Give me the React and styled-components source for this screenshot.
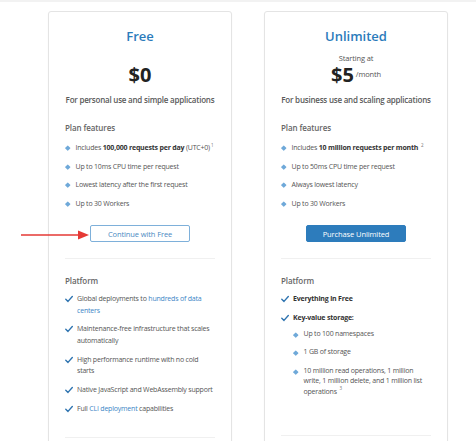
import React from "react";
import styled, {createGlobalStyle} from "styled-components";

const GlobalStyle = createGlobalStyle`
  html, body {
    margin: 0;
    padding: 0;
    background: #ffffff;
    overflow: hidden;
  }
  body {
    font-family: "Open Sans", "Noto Sans", "Liberation Sans", sans-serif;
    color: #4a4a4a;
  }
`;

const Page = styled.div`
  position: relative;
  height: 441px;
  border-top: 2px solid #f2f2f2;
  box-sizing: border-box;
`;

const Cards = styled.div`
  display: flex;
  gap: 32px;
  padding: 9px 0 0 48px;
  align-items: flex-start;
`;

const Card = styled.div`
  width: 184px;
  height: 470px;
  box-sizing: border-box;
  border: 1px solid #e4e4e4;
  border-radius: 3px;
  box-shadow: 0 1px 2px rgba(0, 0, 0, 0.04);
  padding: 16px 16px 0;
  background: #fff;
`;

const Header = styled.div`
  text-align: center;
`;

const Title = styled.div`
  font-size: 13px;
  line-height: 16px;
  font-weight: 600;
  color: #2b7bbb;
`;

const StartingAt = styled.div`
  font-size: 7.5px;
  line-height: 10px;
  margin-top: 9px;
  color: #555;
  letter-spacing: -0.15px;
  visibility: ${props => props.$hidden ? "hidden" : "visible"};
`;

const Price = styled.div`
  margin-top: 1px;
  height: 22px;
  line-height: 22px;
  display: flex;
  justify-content: center;
  align-items: baseline;
  gap: 2px;
`;

const Amount = styled.span`
  font-size: 20px;
  font-weight: 700;
  color: #222;
`;

const Per = styled.span`
  font-size: 7.5px;
  color: #555;
  letter-spacing: -0.15px;
  position: relative;
  top: -5px;
`;

const Subtitle = styled.div`
  margin-top: 8px;
  font-size: 8px;
  line-height: 12px;
  font-weight: 600;
  color: #5a5a5a;
  white-space: nowrap;
  letter-spacing: -0.22px;
`;

const SectionTitle = styled.div`
  margin-top: ${props => props.$top || 16}px;
  font-size: 8px;
  line-height: 12px;
  font-weight: 600;
  color: #666;
  letter-spacing: -0.1px;
`;

const List = styled.ul`
  list-style: none;
  margin: ${props => props.$top || 8}px 0 0;
  padding: 0 0 0 ${props => props.$indent || 0}px;
  display: flex;
  flex-direction: column;
  gap: ${props => props.$gap || 7}px;
`;

const Item = styled.li`
  display: flex;
  align-items: flex-start;
  font-size: 7px;
  letter-spacing: -0.2px;
  line-height: ${props => props.$lh || 11.5}px;
  color: ${props => props.$strong ? "#333" : "#555"};
  font-weight: ${props => props.$strong ? 700 : 400};
`;

const Bullet = styled.span`
  flex: none;
  width: 3.5px;
  height: 3.5px;
  margin: 4px 6px 0 1px;
  background: #6fa9d9;
  transform: rotate(45deg);
  border-radius: 0.5px;
`;

const CheckWrap = styled.span`
  flex: none;
  width: 8px;
  height: 8px;
  margin: 2px 4px 0 0;
  display: flex;
`;

const Bold = styled.b`
  font-weight: 700;
  color: #333;
`;

const Sup = styled.sup`
  font-size: 4.5px;
  line-height: 0;
  margin-left: 1px;
  color: #777;
`;

const Link = styled.a`
  color: #3b86c6;
  text-decoration: none;
`;

const ButtonRow = styled.div`
  margin-top: 16px;
  display: flex;
  justify-content: center;
`;

const Button = styled.button`
  width: 100px;
  height: 17px;
  box-sizing: border-box;
  border-radius: 2px;
  font-family: inherit;
  font-size: 7.5px;
  letter-spacing: -0.1px;
  padding: 0;
  cursor: pointer;
  border: 1px solid ${props => props.$primary ? "#2d7cbc" : "#7eb0da"};
  background: ${props => props.$primary ? "#2d7cbc" : "#ffffff"};
  color: ${props => props.$primary ? "#ffffff" : "#4a8ac2"};
`;

const Divider = styled.hr`
  margin: 16px 0 0;
  border: none;
  border-top: 1px solid #f0f0f0;
`;

const Spacer = styled.div`
  height: ${props => props.$h}px;
`;

const Arrow = styled.svg`
  position: absolute;
  left: 20px;
  top: 226px;
`;

const Check = () => (
    <CheckWrap>
        <svg width="8" height="8" viewBox="0 0 8 8">
            <path d="M0.8 4.3 L3 6.4 L7.3 1.5" fill="none" stroke="#2f74b0" strokeWidth="1.4"
                  strokeLinecap="round" strokeLinejoin="round"/>
        </svg>
    </CheckWrap>
);

const planFree = [
    <>Includes <Bold>100,000 requests per day</Bold> (UTC+0)<Sup>1</Sup></>,
    <>Up to 10ms CPU time per request</>,
    <>Lowest latency after the first request</>,
    <>Up to 30 Workers</>,
];

const planUnlimited = [
    <>Includes <Bold>10 million requests per month</Bold> <Sup>2</Sup></>,
    <>Up to 50ms CPU time per request</>,
    <>Always lowest latency</>,
    <>Up to 30 Workers</>,
];

const platformFree = [
    <>Global deployments to <Link href="#">hundreds of data centers</Link></>,
    <>Maintenance-free infrastructure that scales automatically</>,
    <>High performance runtime with no cold starts</>,
    <>Native JavaScript and WebAssembly support</>,
    <>Full <Link href="#">CLI deployment</Link> capabilities</>,
];

const kvItems = [
    <>Up to 100 namespaces</>,
    <>1 GB of storage</>,
    <>10 million read operations, 1 million write, 1 million delete, and 1 million list operations <Sup>3</Sup></>,
];

const PlanHeader = ({title, starting, amount, per, subtitle}) => (
    <Header>
        <Title>{title}</Title>
        <StartingAt $hidden={!starting}>Starting at</StartingAt>
        <Price>
            <Amount>{amount}</Amount>
            {per && <Per>{per}</Per>}
        </Price>
        <Subtitle>{subtitle}</Subtitle>
    </Header>
);

const Features = ({items}) => (
    <>
        <SectionTitle>Plan features</SectionTitle>
        <List>
            {items.map((item, i) => (
                <Item key={i}><Bullet/><span>{item}</span></Item>
            ))}
        </List>
    </>
);

export default function App() {
    return (
        <Page>
            <GlobalStyle/>
            <Cards>
                <Card>
                    <PlanHeader title="Free" amount="$0"
                                subtitle="For personal use and simple applications"/>
                    <Features items={planFree}/>
                    <ButtonRow><Button>Continue with Free</Button></ButtonRow>
                    <Divider/>
                    <SectionTitle $top={16}>Platform</SectionTitle>
                    <List $top={6} $gap={7.3}>
                        {platformFree.map((item, i) => (
                            <Item key={i}><Check/><span>{item}</span></Item>
                        ))}
                    </List>
                    <Spacer $h={7}/>
                    <Divider/>
                </Card>

                <Card>
                    <PlanHeader title="Unlimited" starting amount="$5" per="/month"
                                subtitle="For business use and scaling applications"/>
                    <Features items={planUnlimited}/>
                    <ButtonRow><Button $primary>Purchase Unlimited</Button></ButtonRow>
                    <Divider/>
                    <SectionTitle $top={16}>Platform</SectionTitle>
                    <List $top={6} $gap={7.5}>
                        <Item $strong><Check/><span>Everything in Free</span></Item>
                        <Item $strong><Check/><span>Key-value storage:</span></Item>
                    </List>
                    <List $top={5} $gap={8} $indent={12}>
                        {kvItems.map((item, i) => (
                            <Item key={i} $lh={10.5}><Bullet/><span>{item}</span></Item>
                        ))}
                    </List>
                    <Spacer $h={22}/>
                    <Divider/>
                </Card>
            </Cards>

            <Arrow width="72" height="14" viewBox="0 0 72 14">
                <line x1="1" y1="7" x2="60" y2="7" stroke="#e53935" strokeWidth="1.6"/>
                <path d="M58 2.5 L69 7 L58 11.5 Z" fill="#e53935"/>
            </Arrow>
        </Page>
    );
}
